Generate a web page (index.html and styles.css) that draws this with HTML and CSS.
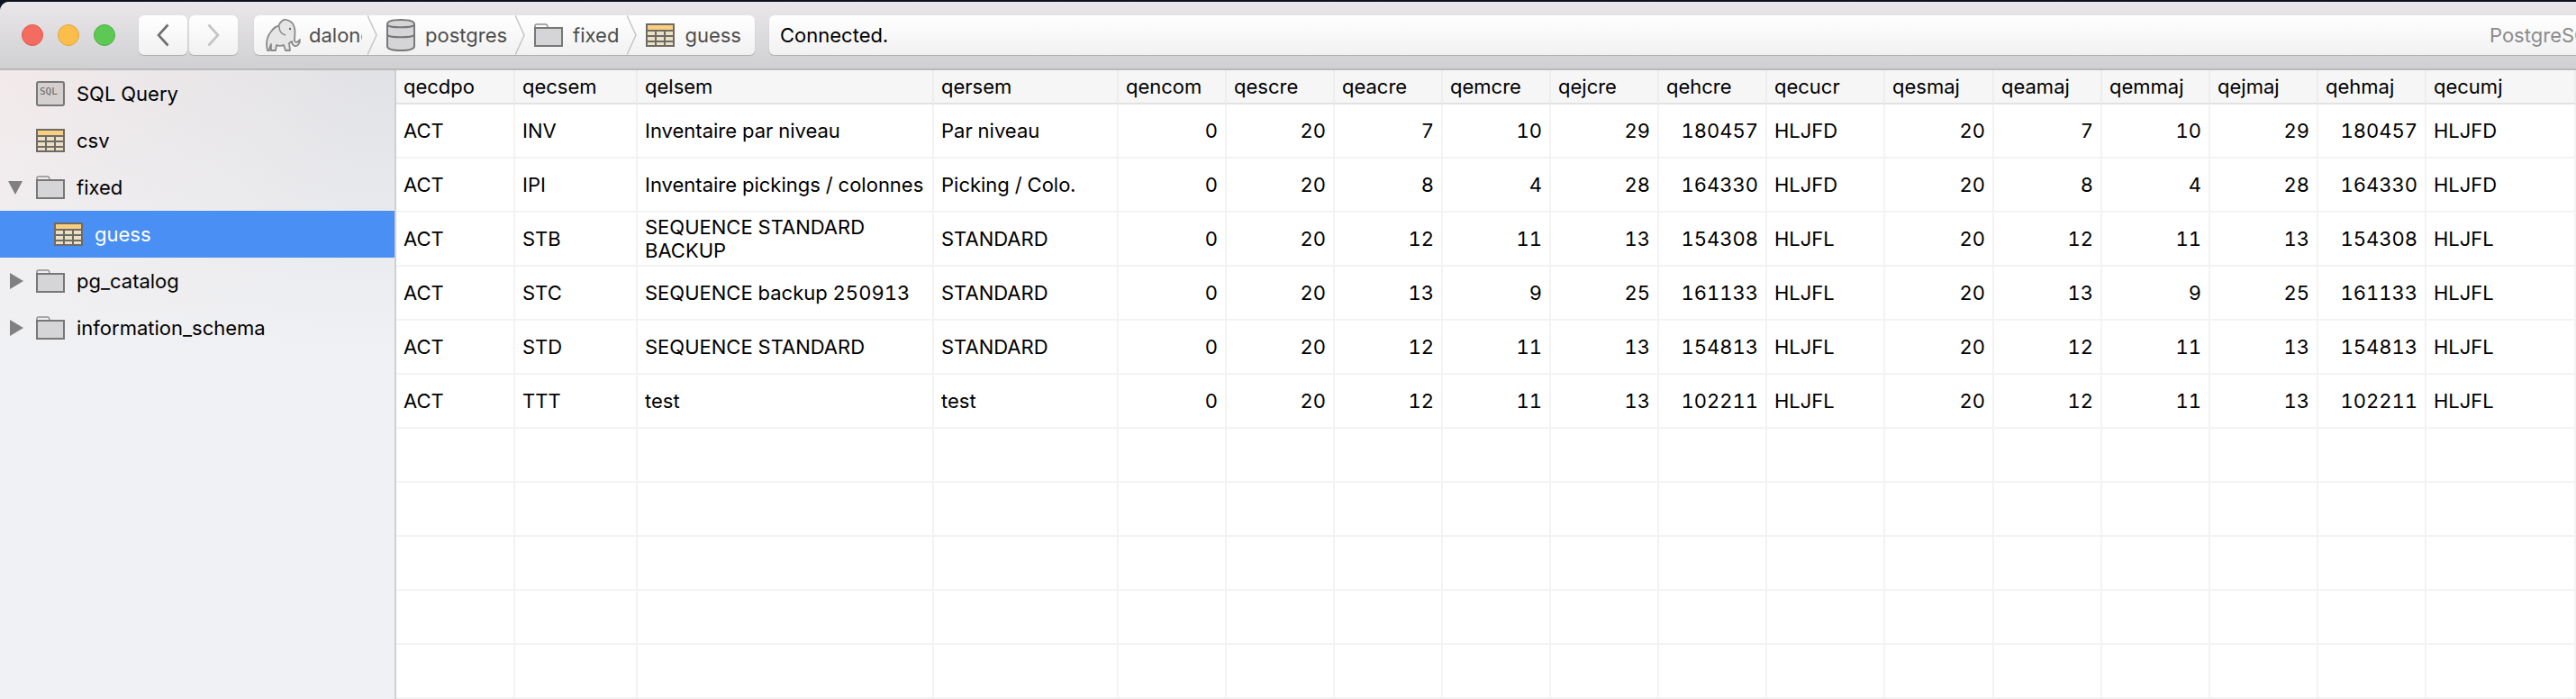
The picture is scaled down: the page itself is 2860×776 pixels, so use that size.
FILE: index.html
```html
<!DOCTYPE html>
<html lang="en">
    <head>
        <meta charset="UTF-8">
        <meta name="viewport" content="width=device-width, initial-scale=1.0">
        <title>Postgres</title>
        <link rel="stylesheet" href="styles.css">
    </head>
    <body>
        <svg class="defs" width="0" height="0">
            <symbol id="i-table" viewBox="0 0 32 26">
                <rect width="32" height="26" fill="#6e6b66"/>
                <rect x="2" y="2" width="28" height="5" fill="#f8cf7e"/>
                <g fill="#ebdfc4">
                    <rect x="2" y="9" width="8" height="4"/><rect x="12" y="9" width="8" height="4"/><rect x="22" y="9" width="8" height="4"/>
                    <rect x="2" y="15" width="8" height="4"/><rect x="12" y="15" width="8" height="4"/><rect x="22" y="15" width="8" height="4"/>
                    <rect x="2" y="21" width="8" height="3"/><rect x="12" y="21" width="8" height="3"/><rect x="22" y="21" width="8" height="3"/>
                </g>
            </symbol>
            <symbol id="i-folder" viewBox="0 0 32 26">
                <path d="M1 6V2.500C1 1.600 1.600 1 2.500 1H13C14 1 14.600 1.600 15 4" fill="none" stroke="#8f8f8f" stroke-width="1.500"/>
                <path d="M1 5H31V25H1Z" fill="#d5d5d7" stroke="#777" stroke-width="2"/>
            </symbol>
            <symbol id="i-db" viewBox="0 0 32 36">
                <path d="M1 6C1 2.500 8 1 16 1S31 2.500 31 6V30C31 33.500 24 35 16 35S1 33.500 1 30Z" fill="#d5d5d7" stroke="#777" stroke-width="2"/>
                <path d="M1 7C4 10 28 10 31 7M1 18C4 21 28 21 31 18" fill="none" stroke="#777" stroke-width="2"/>
            </symbol>
            <symbol id="i-elephant" viewBox="0 0 40 36">
                <path d="M3 35C1 27 2 20 7 14C10 10 13 8 15 8C17 3 21 0 24 1C28 2 32 5 33 10C34 14 33 20 33 24C34 27 37 26 39 23C39 28 36 31 33 30C31 29 30 27 30 25L27 27L28 35H23L21 29C18 30 15 30 13 29L12 35H7L7 28C6 30 5 32 5 35Z" fill="#e6e6e6" stroke="#8a8a8a" stroke-width="1.800" stroke-linejoin="round"/>
                <path d="M16 8C16 13 18 17 23 18" fill="none" stroke="#8a8a8a" stroke-width="1.500"/>
                <circle cx="28" cy="11" r="1.200" fill="#666"/>
            </symbol>
            <symbol id="i-sep" viewBox="0 0 12 44" preserveAspectRatio="none">
                <path d="M0 0L10 22L0 44" fill="none" stroke="#c6c6c6" stroke-width="1.500"/>
            </symbol>
        </svg>

        <div class="window">
            <div class="toolbar">
                <div class="lights">
                    <span class="light red"></span>
                    <span class="light yellow"></span>
                    <span class="light green"></span>
                </div>
                <div class="nav">
                    <button class="nav-btn">
                        <svg width="14" height="26" viewBox="0 0 14 26"><path d="M12.500 1.500L2 13L12.500 24.500" fill="none" stroke="#6f6f6f" stroke-width="2.600"/></svg>
                    </button>
                    <button class="nav-btn">
                        <svg width="14" height="26" viewBox="0 0 14 26"><path d="M1.500 1.500L12 13L1.500 24.500" fill="none" stroke="#c4c4c4" stroke-width="2.600"/></svg>
                    </button>
                </div>
                <div class="crumbs">
                    <div class="crumb crumb-first">
                        <svg class="crumb-icon" width="40" height="36"><use href="#i-elephant"/></svg>
                        <span class="crumb-clip">dalong</span>
                    </div>
                    <svg class="sep" width="12" height="44"><use href="#i-sep"/></svg>
                    <div class="crumb">
                        <svg class="crumb-icon" width="32" height="36"><use href="#i-db"/></svg>
                        <span>postgres</span>
                    </div>
                    <svg class="sep" width="12" height="44"><use href="#i-sep"/></svg>
                    <div class="crumb">
                        <svg class="crumb-icon" width="32" height="26"><use href="#i-folder"/></svg>
                        <span>fixed</span>
                    </div>
                    <svg class="sep" width="12" height="44"><use href="#i-sep"/></svg>
                    <div class="crumb">
                        <svg class="crumb-icon" width="32" height="26"><use href="#i-table"/></svg>
                        <span>guess</span>
                    </div>
                </div>
                <div class="status">
                    <span class="status-text">Connected.</span>
                    <span class="status-app">PostgreSQL</span>
                </div>
            </div>

            <div class="main">
                <div class="sidebar">
                    <div class="side-row">
                        <svg class="side-icon" width="32" height="28" viewBox="0 0 32 28">
                            <rect x="1" y="1" width="30" height="26" rx="2" fill="#d4d0d0" stroke="#777" stroke-width="2"/>
                        </svg>
                        <span class="sql-tag">SQL</span>
                        <span>SQL Query</span>
                    </div>
                    <div class="side-row">
                        <svg class="side-icon" width="32" height="26"><use href="#i-table"/></svg>
                        <span>csv</span>
                    </div>
                    <div class="side-row">
                        <span class="tri tri-down"></span>
                        <svg class="side-icon" width="32" height="26"><use href="#i-folder"/></svg>
                        <span>fixed</span>
                    </div>
                    <div class="side-row side-child selected">
                        <svg class="side-icon" width="32" height="26"><use href="#i-table"/></svg>
                        <span>guess</span>
                    </div>
                    <div class="side-row">
                        <span class="tri tri-right"></span>
                        <svg class="side-icon" width="32" height="26"><use href="#i-folder"/></svg>
                        <span>pg_catalog</span>
                    </div>
                    <div class="side-row">
                        <span class="tri tri-right"></span>
                        <svg class="side-icon" width="32" height="26"><use href="#i-folder"/></svg>
                        <span>information_schema</span>
                    </div>
                </div>

                <table class="grid">
                    <colgroup>
                        <col class="c132"><col class="c136"><col class="c329"><col class="c205">
                        <col class="c120"><col class="c120"><col class="c120"><col class="c120"><col class="c120"><col class="c120">
                        <col class="c131"><col class="c121">
                        <col class="c120"><col class="c120"><col class="c120"><col class="c120">
                        <col class="c166">
                    </colgroup>
                    <thead>
                        <tr>
                            <th>qecdpo</th><th>qecsem</th><th>qelsem</th><th>qersem</th><th>qencom</th><th>qescre</th><th>qeacre</th><th>qemcre</th><th>qejcre</th><th>qehcre</th><th>qecucr</th><th>qesmaj</th><th>qeamaj</th><th>qemmaj</th><th>qejmaj</th><th>qehmaj</th><th>qecumj</th>
                        </tr>
                    </thead>
                    <tbody>
                        <tr>
                            <td>ACT</td><td>INV</td><td>Inventaire par niveau</td><td>Par niveau</td>
                            <td class="num">0</td><td class="num">20</td><td class="num">7</td><td class="num">10</td><td class="num">29</td><td class="num">180457</td><td>HLJFD</td>
                            <td class="num">20</td><td class="num">7</td><td class="num">10</td><td class="num">29</td><td class="num">180457</td><td>HLJFD</td>
                        </tr>
                        <tr>
                            <td>ACT</td><td>IPI</td><td>Inventaire pickings / colonnes</td><td>Picking / Colo.</td>
                            <td class="num">0</td><td class="num">20</td><td class="num">8</td><td class="num">4</td><td class="num">28</td><td class="num">164330</td><td>HLJFD</td>
                            <td class="num">20</td><td class="num">8</td><td class="num">4</td><td class="num">28</td><td class="num">164330</td><td>HLJFD</td>
                        </tr>
                        <tr>
                            <td>ACT</td><td>STB</td><td class="wrap">SEQUENCE STANDARD BACKUP</td><td>STANDARD</td>
                            <td class="num">0</td><td class="num">20</td><td class="num">12</td><td class="num">11</td><td class="num">13</td><td class="num">154308</td><td>HLJFL</td>
                            <td class="num">20</td><td class="num">12</td><td class="num">11</td><td class="num">13</td><td class="num">154308</td><td>HLJFL</td>
                        </tr>
                        <tr>
                            <td>ACT</td><td>STC</td><td>SEQUENCE backup 250913</td><td>STANDARD</td>
                            <td class="num">0</td><td class="num">20</td><td class="num">13</td><td class="num">9</td><td class="num">25</td><td class="num">161133</td><td>HLJFL</td>
                            <td class="num">20</td><td class="num">13</td><td class="num">9</td><td class="num">25</td><td class="num">161133</td><td>HLJFL</td>
                        </tr>
                        <tr>
                            <td>ACT</td><td>STD</td><td>SEQUENCE STANDARD</td><td>STANDARD</td>
                            <td class="num">0</td><td class="num">20</td><td class="num">12</td><td class="num">11</td><td class="num">13</td><td class="num">154813</td><td>HLJFL</td>
                            <td class="num">20</td><td class="num">12</td><td class="num">11</td><td class="num">13</td><td class="num">154813</td><td>HLJFL</td>
                        </tr>
                        <tr>
                            <td>ACT</td><td>TTT</td><td>test</td><td>test</td>
                            <td class="num">0</td><td class="num">20</td><td class="num">12</td><td class="num">11</td><td class="num">13</td><td class="num">102211</td><td>HLJFL</td>
                            <td class="num">20</td><td class="num">12</td><td class="num">11</td><td class="num">13</td><td class="num">102211</td><td>HLJFL</td>
                        </tr>
                        <tr><td></td><td></td><td></td><td></td><td></td><td></td><td></td><td></td><td></td><td></td><td></td><td></td><td></td><td></td><td></td><td></td><td></td></tr>
                        <tr><td></td><td></td><td></td><td></td><td></td><td></td><td></td><td></td><td></td><td></td><td></td><td></td><td></td><td></td><td></td><td></td><td></td></tr>
                        <tr><td></td><td></td><td></td><td></td><td></td><td></td><td></td><td></td><td></td><td></td><td></td><td></td><td></td><td></td><td></td><td></td><td></td></tr>
                        <tr><td></td><td></td><td></td><td></td><td></td><td></td><td></td><td></td><td></td><td></td><td></td><td></td><td></td><td></td><td></td><td></td><td></td></tr>
                        <tr><td></td><td></td><td></td><td></td><td></td><td></td><td></td><td></td><td></td><td></td><td></td><td></td><td></td><td></td><td></td><td></td><td></td></tr>
                    </tbody>
                </table>
            </div>
        </div>
    </body>
</html>
```

FILE: styles.css
```css
* {
    box-sizing: border-box;
}

html, body {
    margin: 0;
    padding: 0;
    height: 100%;
    overflow: hidden;
}

body {
    font-family: Inter, "Liberation Sans", sans-serif;
    font-size: 22px;
    font-variant-numeric: tabular-nums;
    color: #000;
    background-color: #0c1422;
    padding-top: 2px;
}

.defs {
    display: block;
    height: 0;
}

.window {
    height: 774px;
    display: flex;
    flex-direction: column;
    border-radius: 10px 0 0 0;
    overflow: hidden;
    background-color: #fff;
}

/* toolbar */
.toolbar {
    height: 76px;
    flex: none;
    display: flex;
    align-items: center;
    padding: 0 0 1px 24px;
    background: linear-gradient(#e9e7e9, #d0cfd1);
    border-bottom: 2px solid #b9b9b9;
}

.lights {
    display: flex;
    gap: 16px;
    margin-right: 26px;
}

.light {
    width: 24px;
    height: 24px;
    border-radius: 50%;
}

.red {
    background-color: #f46c60;
    border: 1px solid #e2574c;
}

.yellow {
    background-color: #fbbe4a;
    border: 1px solid #e2a63c;
}

.green {
    background-color: #5ec854;
    border: 1px solid #4fb045;
}

.nav {
    display: flex;
    gap: 2px;
    margin-right: 18px;
}

.nav-btn {
    width: 54px;
    height: 44px;
    padding: 0;
    display: flex;
    align-items: center;
    justify-content: center;
    background: linear-gradient(#fff, #f1f1f1);
    border: none;
    border-radius: 6px;
    box-shadow: 0 1px 1px #aaa;
}

.crumbs {
    width: 556px;
    height: 44px;
    flex: none;
    display: flex;
    align-items: center;
    padding-left: 12px;
    margin-right: 16px;
    color: #4d4d4d;
    background: linear-gradient(#fff, #f1f1f1);
    border-radius: 6px;
    box-shadow: 0 1px 1px #aaa;
}

.crumb {
    display: flex;
    align-items: center;
    gap: 11px;
}

.crumb-first {
    width: 114px;
    gap: 9px;
    margin-right: -9px;
}

.crumb-clip {
    width: 59px;
    overflow: hidden;
}

.sep {
    margin: 0 9px;
    flex: none;
}

.status {
    flex: 1;
    height: 44px;
    display: flex;
    align-items: center;
    justify-content: space-between;
    padding-left: 12px;
    overflow: hidden;
    margin-right: -40px;
    white-space: nowrap;
    background: linear-gradient(#fff, #f1f1f1);
    border-radius: 6px 0 0 6px;
    box-shadow: 0 1px 1px #aaa;
}

.status-app {
    color: #8b8b8b;
    width: 136px;
    overflow: hidden;
}

/* sidebar */
.main {
    flex: 1;
    display: flex;
    min-height: 0;
}

.sidebar {
    width: 440px;
    flex: none;
    background: linear-gradient(rgba(240, 241, 244, 0), #f0f1f4 320px), linear-gradient(100deg, #f2eaea, #e1e2e6 75%);
    border-right: 2px solid #d0d0d0;
}

.side-row {
    height: 52px;
    display: flex;
    align-items: center;
    padding-left: 40px;
    gap: 13px;
    position: relative;
}

.side-child {
    padding-left: 60px;
}

.selected {
    background-color: #4a8ff4;
    color: #fff;
}

.side-icon {
    flex: none;
}

.sql-tag {
    position: absolute;
    left: 44px;
    top: 17px;
    font-family: "DejaVu Sans Mono", monospace;
    font-size: 11px;
    color: #666;
}

.tri {
    position: absolute;
    width: 0;
    height: 0;
}

.tri-right {
    left: 11px;
    top: 17px;
    border-left: 15px solid #808080;
    border-top: 9px solid transparent;
    border-bottom: 9px solid transparent;
}

.tri-down {
    left: 9px;
    top: 19px;
    border-top: 15px solid #808080;
    border-left: 8.500px solid transparent;
    border-right: 8.500px solid transparent;
}

/* data grid */
.grid {
    width: 2420px;
    flex: none;
    table-layout: fixed;
    border-collapse: separate;
    border-spacing: 0;
    height: 0;
}

.c120 { width: 120px; }
.c121 { width: 121px; }
.c131 { width: 131px; }
.c132 { width: 132px; }
.c136 { width: 136px; }
.c166 { width: 166px; }
.c205 { width: 205px; }
.c329 { width: 329px; }

th {
    height: 38px;
    padding: 0 8px;
    font-weight: normal;
    text-align: left;
    white-space: nowrap;
    background-color: #f6f6f6;
    border-right: 2px solid #ededed;
    border-bottom: 2px solid #e2e2e2;
}

td {
    height: 60px;
    padding: 0 8px;
    white-space: nowrap;
    border-right: 2px solid #f3f3f3;
    border-bottom: 2px solid #f3f3f3;
}

.num {
    text-align: right;
}

.wrap {
    white-space: normal;
    line-height: 26px;
}
```
